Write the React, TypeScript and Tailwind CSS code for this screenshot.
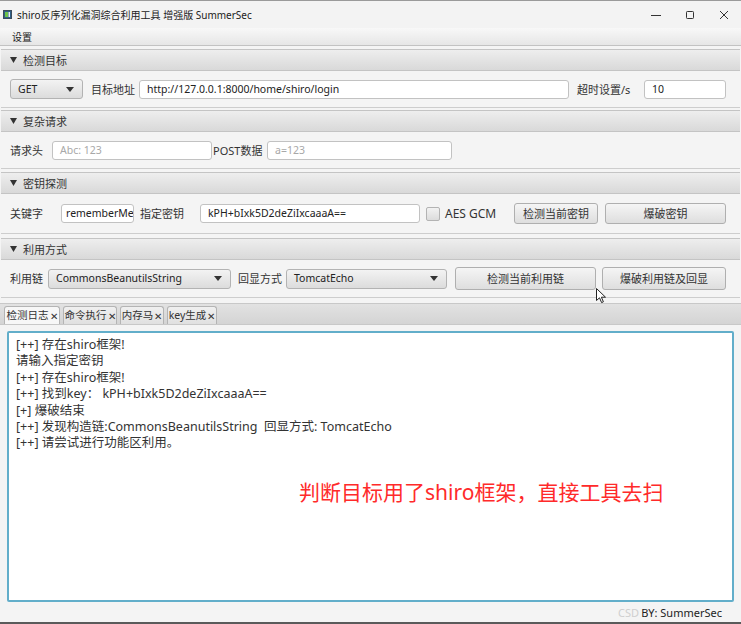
import React from "react";

const FONT = "font-['Noto_Sans','Noto_Sans_CJK_SC',sans-serif]";

function Arrow() {
  return (
    <svg width="8" height="5" viewBox="0 0 8 5" className="shrink-0">
      <path d="M0 0 L8 0 L4 5 Z" fill="#333" />
    </svg>
  );
}

function Combo({ w, text }: { w: string; text: string }) {
  return (
    <div
      className={`${w} h-[20px] shrink-0 bg-linear-to-b from-[#f3f3f3] to-[#dcdcdc] border border-[#b3b3b3] rounded-[3px] flex items-center justify-between pl-[7px] pr-[8px] text-[10.5px] text-[#222]`}
    >
      <span className="leading-none">{text}</span>
      <Arrow />
    </div>
  );
}

function Input({ w, text, ph, px = "px-[7px]" }: { w: string; text?: string; ph?: string; px?: string }) {
  return (
    <div
      className={`${w} ${px} h-[19px] shrink-0 bg-white border border-[#c2c2c2] rounded-[3px] flex items-center text-[10.5px] leading-none overflow-hidden whitespace-nowrap`}
    >
      {text ? <span className="text-[#222]">{text}</span> : <span className="text-[#a8a8a8]">{ph}</span>}
    </div>
  );
}

function Btn({ w, text, h = "h-[21px]" }: { w: string; text: string; h?: string }) {
  return (
    <div
      className={`${w} ${h} shrink-0 bg-linear-to-b from-[#f5f5f5] to-[#dedede] border border-[#afafaf] rounded-[3px] flex items-center justify-center text-[11px] text-[#333] leading-none`}
    >
      {text}
    </div>
  );
}

function Label({ w, text, cls = "" }: { w: string; text: string; cls?: string }) {
  return <span className={`${w} ${cls} shrink-0 text-[11px] text-[#333] leading-none whitespace-nowrap`}>{text}</span>;
}

function Header({ title }: { title: string }) {
  return (
    <div className="h-[22px] bg-linear-to-b from-[#eeeeee] to-[#d9d9d9] border-y border-[#c4c4c4] flex items-center pl-[9px] gap-[6px]">
      <svg width="7" height="6" viewBox="0 0 7 6">
        <path d="M0 0 L7 0 L3.5 6 Z" fill="#333" />
      </svg>
      <span className="text-[11px] text-[#333] leading-none">{title}</span>
    </div>
  );
}

function Tab({ w, text, sel }: { w: string; text: string; sel?: boolean }) {
  return (
    <div
      className={`${w} h-[18px] shrink-0 border border-b-0 border-[#b4b4b4] rounded-t-[3px] flex items-center justify-center gap-[1px] text-[10.5px] text-[#333] leading-none whitespace-nowrap ${
        sel ? "bg-[#f7f7f7]" : "bg-linear-to-b from-[#f0f0f0] to-[#e0e0e0]"
      }`}
    >
      <span>{text}</span>
      <span className="text-[10px]">✕</span>
    </div>
  );
}

export default function App() {
  const logs = [
    "[++] 存在shiro框架!",
    "请输入指定密钥",
    "[++] 存在shiro框架!",
    "[++] 找到key： kPH+bIxk5D2deZiIxcaaaA==",
    "[+] 爆破结束",
    "[++] 发现构造链:CommonsBeanutilsString  回显方式: TomcatEcho",
    "[++] 请尝试进行功能区利用。",
  ];
  return (
    <div className={`${FONT} w-[741px] h-[624px] bg-[#f4f4f4] flex flex-col overflow-hidden relative`}>
      {/* title bar */}
      <div className="h-[28px] shrink-0 bg-[#f3f3f3] border-t border-[#9a9a9a] flex items-center pl-[3px]">
        <svg width="9" height="9" viewBox="0 0 9 9" className="shrink-0">
          <rect x="0.5" y="0.5" width="8" height="8" fill="#2f5f86" stroke="#3a4a5a" />
          <rect x="2" y="2" width="3" height="5" fill="#6cc24a" />
          <rect x="5.5" y="2" width="1.5" height="5" fill="#e8f0f8" />
        </svg>
        <span className="ml-[5px] text-[10px] text-[#222] leading-none">shiro反序列化漏洞综合利用工具 增强版 SummerSec</span>
        <div className="ml-auto flex items-center h-full">
          <div className="w-[34px] flex justify-center">
            <svg width="10" height="10" viewBox="0 0 10 10">
              <path d="M0 5.5 H10" stroke="#333" strokeWidth="1" />
            </svg>
          </div>
          <div className="w-[34px] flex justify-center">
            <svg width="10" height="10" viewBox="0 0 10 10">
              <rect x="1.5" y="1.5" width="7" height="7" rx="0.8" fill="none" stroke="#333" strokeWidth="1" />
            </svg>
          </div>
          <div className="w-[34px] flex justify-center">
            <svg width="10" height="10" viewBox="0 0 10 10">
              <path d="M1 1 L9 9 M9 1 L1 9" stroke="#333" strokeWidth="1" />
            </svg>
          </div>
        </div>
      </div>
      {/* menu bar */}
      <div className="h-[18px] shrink-0 bg-linear-to-b from-[#f8f8f8] to-[#e6e6e6] border-b border-[#c2c2c2] flex items-center pl-[12px]">
        <span className="text-[10px] text-[#222] leading-none">设置</span>
      </div>

      <div className="flex flex-col mt-[3px] mx-[1px] gap-[2px]">
        {/* section 1 */}
        <div className="flex flex-col">
          <Header title="检测目标" />
          <div className="h-[37px] border-b border-[#cdcdcd] flex items-center pl-[9px]">
            <Combo w="w-[73px]" text="GET" />
            <Label w="w-[48px]" cls="ml-[8px]" text="目标地址" />
            <Input w="w-[430px]" text="http://127.0.0.1:8000/home/shiro/login" />
            <Label w="w-[67px]" cls="ml-[8px]" text="超时设置/s" />
            <Input w="w-[82px]" text="10" />
          </div>
        </div>
        {/* section 2 */}
        <div className="flex flex-col">
          <Header title="复杂请求" />
          <div className="h-[37px] border-b border-[#cdcdcd] flex items-center pl-[9px]">
            <Label w="w-[42px]" text="请求头" />
            <Input w="w-[160px]" ph="Abc: 123" />
            <Label w="w-[54px]" cls="ml-[1px]" text="POST数据" />
            <Input w="w-[185px]" ph="a=123" />
          </div>
        </div>
        {/* section 3 */}
        <div className="flex flex-col mt-[1px]">
          <Header title="密钥探测" />
          <div className="h-[40px] border-b border-[#cdcdcd] flex items-center pl-[9px]">
            <Label w="w-[51px]" text="关键字" />
            <Input w="w-[73px]" px="px-[4px]" text="rememberMe" />
            <Label w="w-[60px]" cls="ml-[6px]" text="指定密钥" />
            <Input w="w-[220px]" text="kPH+bIxk5D2deZiIxcaaaA==" />
            <div className="ml-[6px] w-[14px] h-[14px] shrink-0 border border-[#b3b3b3] rounded-[2px] bg-linear-to-b from-[#f2f2f2] to-[#dcdcdc]" />
            <span className="ml-[5px] w-[69px] shrink-0 text-[12px] text-[#333] leading-none">AES GCM</span>
            <Btn w="w-[84px]" text="检测当前密钥" />
            <Btn w="w-[121px] ml-[7px]" text="爆破密钥" />
          </div>
        </div>
        {/* section 4 */}
        <div className="flex flex-col mt-[2px]">
          <Header title="利用方式" />
          <div className="h-[38px] border-b border-[#cdcdcd] flex items-center pl-[9px]">
            <Label w="w-[38px]" text="利用链" />
            <Combo w="w-[183px]" text="CommonsBeanutilsString" />
            <Label w="w-[48px]" cls="ml-[7px]" text="回显方式" />
            <Combo w="w-[161px]" text="TomcatEcho" />
            <Btn w="w-[141px] ml-[8px]" h="h-[23px]" text="检测当前利用链" />
            <Btn w="w-[124px] ml-[6px]" h="h-[23px]" text="爆破利用链及回显" />
          </div>
        </div>
      </div>

      {/* tab bar */}
      <div className="mt-[5px] h-[22px] shrink-0 bg-linear-to-b from-[#e2e2e2] to-[#d4d4d4] border-y border-[#c8c8c8] flex items-end pl-[4px] gap-[3px]">
        <Tab w="w-[56px]" text="检测日志" sel />
        <Tab w="w-[54px]" text="命令执行" />
        <Tab w="w-[44px]" text="内存马" />
        <Tab w="w-[50px]" text="key生成" />
      </div>

      {/* text area */}
      <div className="mt-[6px] mx-[7px] h-[271px] shrink-0 bg-white border-2 border-[#62aeca] rounded-[2px] pl-[7px] pt-[4px] relative">
        {logs.map((l, i) => (
          <div key={i} className="text-[12.5px] leading-[16.4px] text-[#333] whitespace-pre">
            {l}
          </div>
        ))}
        <div className="absolute left-[290px] top-[149px] text-[21px] leading-none text-[#ff2a2a] whitespace-nowrap">
          判断目标用了shiro框架，直接工具去扫
        </div>
      </div>

      {/* footer */}
      <div className="flex-1 flex items-center justify-end pr-[19px] gap-[2px]">
        <span className="text-[11px] text-[#cfcfcf] leading-none">CSD</span>
        <span className="text-[11px] text-[#222] leading-none">BY: SummerSec</span>
      </div>
      <div className="h-[2px] shrink-0 bg-[#5a5a5a]" />

      {/* mouse cursor */}
      <svg className="absolute left-[596px] top-[288px]" width="11" height="16" viewBox="0 0 11 16">
        <path d="M0.5 0.5 L0.5 12.5 L3.5 9.8 L5.6 14.6 L7.4 13.8 L5.4 9.2 L9.5 9.2 Z" fill="#fff" stroke="#222" strokeWidth="1" strokeLinejoin="round" />
      </svg>
    </div>
  );
}
